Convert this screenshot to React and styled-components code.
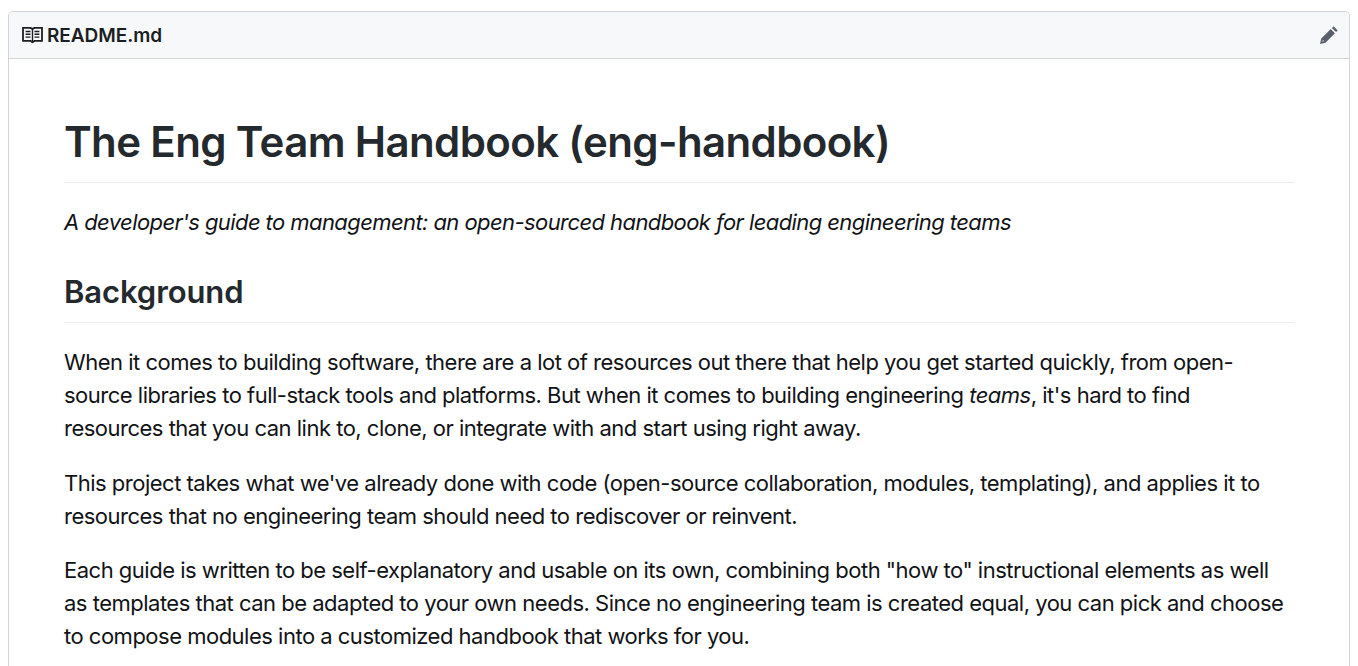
import React from 'react'
import styled, { createGlobalStyle } from 'styled-components'

const GlobalStyle = createGlobalStyle`
  html, body {
    margin: 0;
    background: #ffffff;
    overflow: hidden;
  }
`

const Page = styled.div`
  height: 666px;
  box-sizing: border-box;
  overflow: hidden;
  padding: 11px 8px 0;
  font-family: Inter, "Liberation Sans", sans-serif;
  color: #24292e;
`

const Card = styled.div`
  width: 1342px;
  height: 100%;
  box-sizing: border-box;
  border: 1px solid #d1d5da;
  border-bottom: 0;
  border-radius: 5px 5px 0 0;
`

const CardHeader = styled.div`
  height: 47px;
  box-sizing: border-box;
  background: #f6f8fa;
  border-bottom: 1px solid #d1d5da;
  border-radius: 4px 4px 0 0;
  display: flex;
  align-items: center;
  justify-content: space-between;
  padding: 0 10px 0 13px;
`

const FileName = styled.div`
  display: flex;
  align-items: center;
  gap: 4px;
  font-size: 19px;
  font-weight: 600;
  letter-spacing: -0.05px;
  color: #1b1f23;
`

const Article = styled.article`
  padding: 56px 55px 0;
`

const Title = styled.h1`
  margin: 0;
  padding-bottom: 14px;
  border-bottom: 1px solid #eaecef;
  font-size: 42px;
  line-height: 53px;
  font-weight: 600;
  letter-spacing: -0.63px;
`

const Section = styled.h2`
  margin: 33px 0 0;
  padding-bottom: 10px;
  border-bottom: 1px solid #eaecef;
  font-size: 31px;
  line-height: 40px;
  font-weight: 600;
  letter-spacing: -0.1px;
`

const Para = styled.p`
  margin: ${p => p.$top}px 0 0;
  font-size: 22px;
  line-height: 33px;
  font-weight: 400;
  letter-spacing: -0.5px;
  color: #111316;
`

const Tagline = styled(Para)`
  font-style: italic;
  letter-spacing: -0.58px;
`

const BookIcon = () => (
  <svg width="21" height="18" viewBox="0 0 21 18" fill="none" stroke="#1b1f23">
    <path strokeWidth="1.8" d="M1 1.9h7.5l2 1 2-1H20v13h-7.5l-2 1.2-2-1.2H1z" />
    <path strokeWidth="1.4" d="M10.5 3v12M3.6 5.5h4.9M3.6 8.3h4.9M3.6 11.1h4.9M12.5 5.5h4.9M12.5 8.3h4.9M12.5 11.1h4.9" />
  </svg>
)

const PencilIcon = () => (
  <svg width="20" height="20" viewBox="0 0 20 20" fill="#586069">
    <path d="M14.6 1.3l4.1 4.1-1.7 1.7-4.1-4.1 1.7-1.7z" />
    <path fillRule="evenodd" d="M11.8 4.1l4.1 4.1L6.4 17.7 1 19l1.3-5.4 9.5-9.5zM3.9 14.9l-.6 1.8 0 0 1.8-.6-1.2-1.2z" />
  </svg>
)

export default function App() {
  return (
    <>
      <GlobalStyle />
      <Page>
        <Card>
          <CardHeader>
            <FileName>
              <BookIcon />
              README.md
            </FileName>
            <PencilIcon />
          </CardHeader>
          <Article>
            <Title>The Eng Team Handbook (eng-handbook)</Title>
            <Tagline $top={23}>A developer's guide to management: an open-sourced handbook for leading engineering teams</Tagline>
            <Section>Background</Section>
            <Para $top={23}>
              When it comes to building software, there are a lot of resources out there that help you get started quickly, from open-source libraries to full-stack tools and platforms. But when it comes to building engineering <em>teams</em>, it's hard to find resources that you can link to, clone, or integrate with and start using right away.
            </Para>
            <Para $top={22}>
              This project takes what we've already done with code (open-source collaboration, modules, templating), and applies it to resources that no engineering team should need to rediscover or reinvent.
            </Para>
            <Para $top={21}>
              Each guide is written to be self-explanatory and usable on its own, combining both "how to" instructional elements as well as templates that can be adapted to your own needs. Since no engineering team is created equal, you can pick and choose to compose modules into a customized handbook that works for you.
            </Para>
          </Article>
        </Card>
      </Page>
    </>
  )
}
